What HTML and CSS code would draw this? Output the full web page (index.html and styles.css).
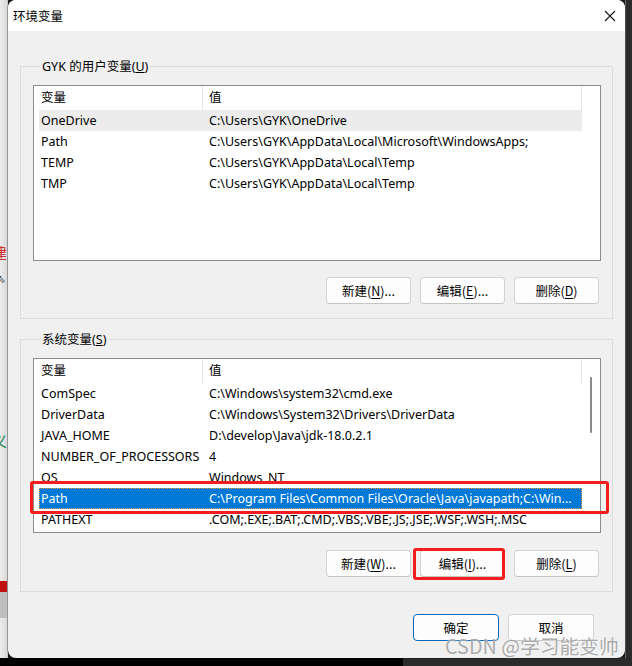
FILE: index.html
```html
<!DOCTYPE html>
<html lang="zh-CN">
<head>
<meta charset="utf-8">
<title>环境变量</title>
<link rel="stylesheet" href="styles.css">
</head>
<body>
<div class="screen">
  <div class="side-left">
    <span class="bg-char red-char">建</span>
    <span class="bg-cursor">⇖</span>
    <span class="bg-char green-char">义</span>
    <div class="bg-redbar"></div>
    <div class="bg-graybar"></div>
  </div>

  <div class="window">
    <div class="titlebar">
      <span class="title">环境变量</span>
      <svg class="close" width="12" height="12" viewBox="0 0 12 12"><path d="M1 1 L11 11 M11 1 L1 11" stroke="#1a1a1a" stroke-width="1.1" fill="none"/></svg>
    </div>

    <div class="body">
      <fieldset class="group group-user">
        <legend>GYK 的用户变量(<u>U</u>)</legend>
        <div class="list list-user">
          <div class="list-main">
            <div class="row header"><span class="c1">变量</span><span class="c2">值</span></div>
            <div class="row sel-gray"><span class="c1">OneDrive</span><span class="c2">C:\Users\GYK\OneDrive</span></div>
            <div class="row"><span class="c1">Path</span><span class="c2">C:\Users\GYK\AppData\Local\Microsoft\WindowsApps;</span></div>
            <div class="row"><span class="c1">TEMP</span><span class="c2">C:\Users\GYK\AppData\Local\Temp</span></div>
            <div class="row"><span class="c1">TMP</span><span class="c2">C:\Users\GYK\AppData\Local\Temp</span></div>
          </div>
          <div class="scroll"></div>
        </div>
        <div class="btnrow">
          <button class="btn">新建(<u>N</u>)...</button>
          <button class="btn">编辑(<u>E</u>)...</button>
          <button class="btn">删除(<u>D</u>)</button>
        </div>
      </fieldset>

      <fieldset class="group group-sys">
        <legend>系统变量(<u>S</u>)</legend>
        <div class="list list-sys">
          <div class="list-main">
            <div class="row header"><span class="c1">变量</span><span class="c2">值</span></div>
            <div class="row"><span class="c1">ComSpec</span><span class="c2">C:\Windows\system32\cmd.exe</span></div>
            <div class="row"><span class="c1">DriverData</span><span class="c2">C:\Windows\System32\Drivers\DriverData</span></div>
            <div class="row"><span class="c1">JAVA_HOME</span><span class="c2">D:\develop\Java\jdk-18.0.2.1</span></div>
            <div class="row"><span class="c1">NUMBER_OF_PROCESSORS</span><span class="c2">4</span></div>
            <div class="row"><span class="c1">OS</span><span class="c2">Windows_NT</span></div>
            <div class="row sel-blue"><span class="c1">Path</span><span class="c2">C:\Program Files\Common Files\Oracle\Java\javapath;C:\Win...</span></div>
            <div class="row"><span class="c1">PATHEXT</span><span class="c2">.COM;.EXE;.BAT;.CMD;.VBS;.VBE;.JS;.JSE;.WSF;.WSH;.MSC</span></div>
          </div>
          <div class="scroll"><div class="thumb"></div></div>
        </div>
        <div class="btnrow">
          <button class="btn">新建(<u>W</u>)...</button>
          <button class="btn">编辑(<u>I</u>)...</button>
          <button class="btn">删除(<u>L</u>)</button>
        </div>
      </fieldset>

      <div class="footer">
        <button class="btn btn-wide btn-default">确定</button>
        <button class="btn btn-wide">取消</button>
      </div>
    </div>

    <div class="mark mark-row"></div>
    <div class="mark mark-btn"></div>
  </div>

  <div class="side-right"></div>

  <div class="bottom">
    <div class="bottom-left"></div>
    <div class="bottom-right"></div>
  </div>

  <div class="watermark">CSDN @学习能变帅</div>
</div>
</body>
</html>
```

FILE: styles.css
```css
* { box-sizing: border-box; }
html, body { margin: 0; padding: 0; }
body {
  width: 632px;
  height: 666px;
  overflow: hidden;
  background: #1e1e1e;
  font-family: "Noto Sans", "Noto Sans CJK SC", sans-serif;
  font-size: 12.5px;
  color: #000;
}
.screen {
  position: relative;
  width: 632px;
  height: 666px;
  display: grid;
  grid-template-columns: 8px 617px 7px;
  grid-template-rows: 658px 8px;
}

/* background app remnants */
.side-left {
  background: linear-gradient(to right, #ececec, #d9d9d9);
  overflow: hidden;
  display: flex;
  flex-direction: column;
  border-right: 1px solid #c8c8c8;
}
.bg-char {
  font-family: "Noto Sans CJK SC", sans-serif;
  font-size: 15px;
  line-height: 16px;
  margin-left: -8px;
}
.red-char { color: #c8302c; margin-top: 245px; }
.bg-cursor { font-size: 12px; line-height: 12px; margin-left: -4px; margin-top: 12px; color: #444; }
.green-char { color: #2e8b57; margin-top: 148px; }
.bg-redbar { height: 11px; background: #c01010; margin-top: 132px; }
.bg-graybar { height: 26px; background: #bdbdbd; }

.side-right {
  background: #2b2b2b;
  border-left: 1px solid #6a6a6a;
}
.bottom {
  grid-column: 1 / 4;
  display: flex;
}
.bottom-left { width: 403px; background: #000; }
.bottom-right { flex: 1; background: #2b2b2b; }

/* window */
.window {
  position: relative;
  background: #f0f0f0;
  border-radius: 8px;
  overflow: hidden;
  box-shadow: 0 0 0 1px rgba(0,0,0,0.25);
  display: flex;
  flex-direction: column;
}
.titlebar {
  height: 31px;
  background: #fff;
  display: flex;
  align-items: center;
  justify-content: space-between;
  padding: 0 9px 0 5px;
  flex: none;
}
.title { font-family: "Noto Sans CJK SC", sans-serif; font-size: 12.5px; }
.close { display: block; }

.body {
  padding: 0 12px 17px 12px;
  display: flex;
  flex-direction: column;
}

.group {
  margin: 0;
  border: 1px solid #dcdcdc;
  padding: 10px 11px 14px 12px;
  min-width: 0;
}
.group legend {
  padding: 0 2px;
  margin-left: 7px;
  line-height: 17px;
  font-size: 12.5px;
}
.group-user { margin-top: 27px; }
.group-sys { margin-top: 12px; }

.list {
  background: #fff;
  border: 1px solid #8c8c8c;
  display: flex;
}
.list-user { height: 176px; }
.list-sys { height: 175px; }
.list-main {
  flex: 1;
  padding-left: 5px;
  overflow: hidden;
}
.scroll {
  width: 18px;
  position: relative;
  flex: none;
}
.thumb {
  width: 2px;
  height: 56px;
  background: #8a8a8a;
  margin: 18px 0 0 8px;
  border-radius: 1px;
}

.row {
  display: grid;
  grid-template-columns: 168px 1fr;
  height: 21px;
  line-height: 21px;
  white-space: nowrap;
}
.row span { overflow: hidden; padding-left: 2px; }
.row.header {
  height: 24px;
  line-height: 24px;
  border-right: 1px solid #e5e5e5;
}
.row.header .c1 {
  width: 164px;
  border-right: 1px solid #e5e5e5;
}
.row.header .c2 { padding-left: 2px; }
.sel-gray { background: #ececec; }
.sel-blue {
  background: #0078d7;
  color: #fff;
  outline: 1px dotted #f0a040;
  outline-offset: -1px;
}

.btnrow {
  display: flex;
  justify-content: flex-end;
  gap: 9px;
  margin-top: 16px;
  margin-right: 2px;
}
.group-sys .btnrow { margin-top: 17px; }
.btn {
  width: 85px;
  height: 27px;
  flex: none;
  background: #fdfdfd;
  border: 1px solid #d2d2d2;
  border-bottom-color: #c4c4c4;
  border-radius: 4px;
  font-family: "Noto Sans CJK SC", "Noto Sans", sans-serif;
  font-size: 12.5px;
  color: #000;
  padding: 0;
}
.btn u { text-underline-offset: 2px; }
.btn-wide { width: 86px; }
.btn-default { border: 1px solid #0067c0; }

.footer {
  display: flex;
  justify-content: flex-end;
  gap: 9px;
  margin-top: 22px;
  margin-right: 19px;
}

/* red annotation marks */
.mark {
  position: absolute;
  border: 3px solid #f41c1c;
  border-radius: 3px;
}
.mark-row { left: 22px; top: 481px; width: 579px; height: 33px; }
.mark-btn { left: 405px; top: 548px; width: 92px; height: 32px; }

.watermark {
  position: absolute;
  left: 445px;
  top: 633px;
  font-family: "Noto Sans CJK SC", sans-serif;
  font-size: 19.8px;
  line-height: 25px;
  color: rgba(150,150,150,0.8);
  text-shadow: 0 0 2px rgba(255,255,255,0.9);
  white-space: nowrap;
}
```
